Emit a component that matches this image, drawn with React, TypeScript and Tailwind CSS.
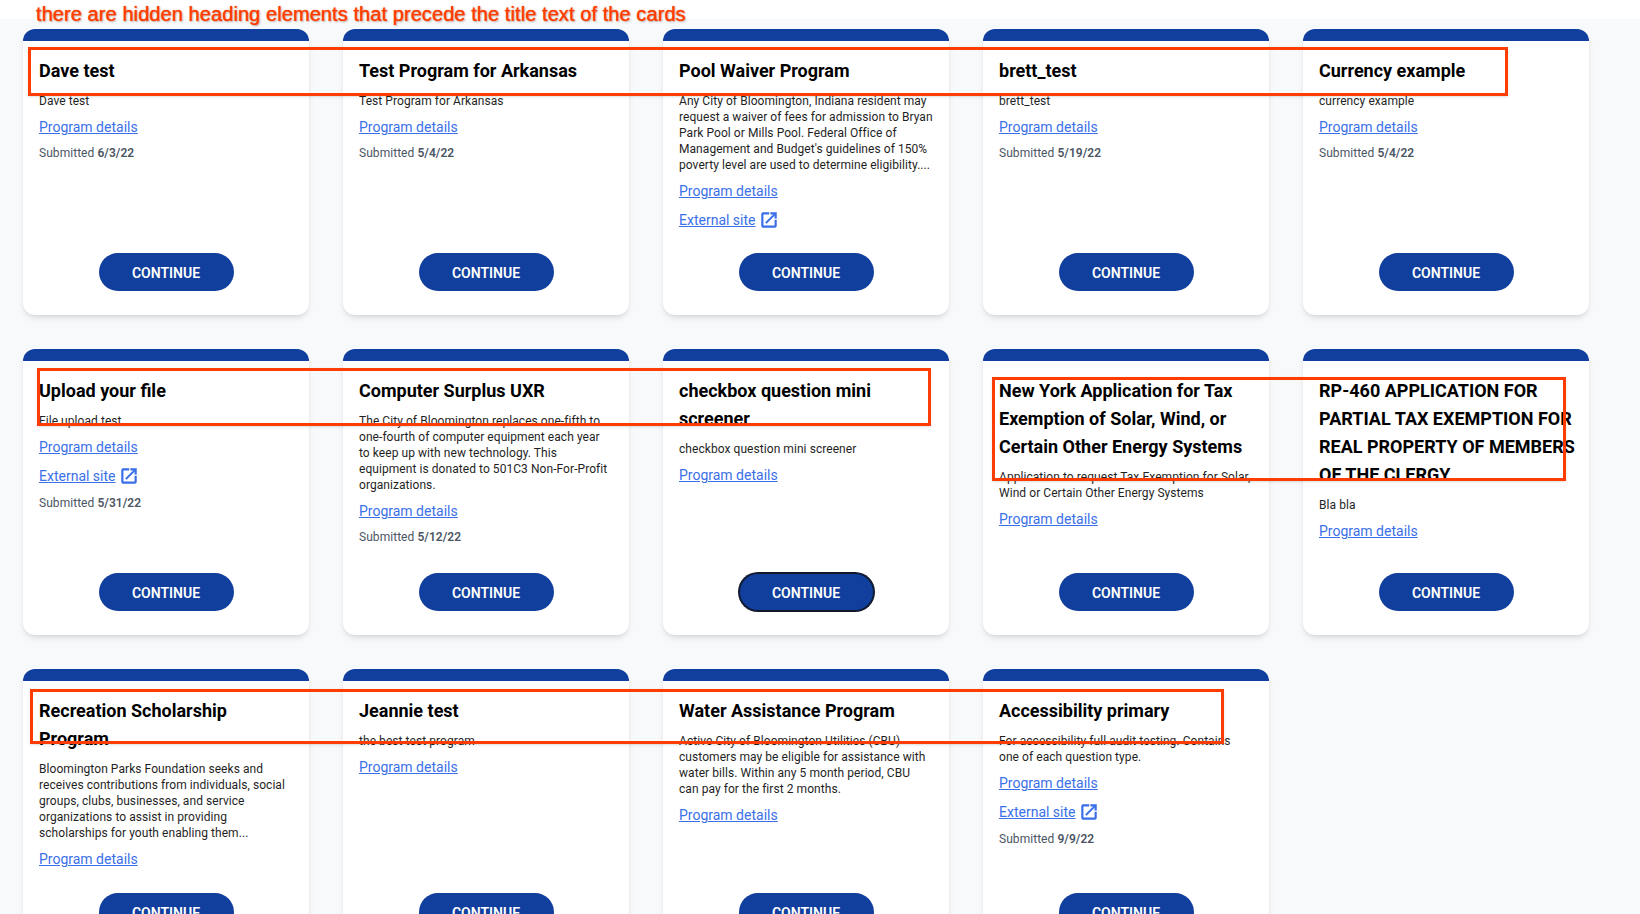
type Program = {
  title: string;
  description: string;
  externalSite?: boolean;
  submitted?: string;
  focused?: boolean;
};

const programs: Program[] = [
  { title: 'Dave test', description: 'Dave test', submitted: '6/3/22' },
  { title: 'Test Program for Arkansas', description: 'Test Program for Arkansas', submitted: '5/4/22' },
  {
    title: 'Pool Waiver Program',
    description:
      "Any City of Bloomington, Indiana resident may request a waiver of fees for admission to Bryan Park Pool or Mills Pool. Federal Office of Management and Budget's guidelines of 150% poverty level are used to determine eligibility....",
    externalSite: true,
  },
  { title: 'brett_test', description: 'brett_test', submitted: '5/19/22' },
  { title: 'Currency example', description: 'currency example', submitted: '5/4/22' },
  { title: 'Upload your file', description: 'File upload test', externalSite: true, submitted: '5/31/22' },
  {
    title: 'Computer Surplus UXR',
    description:
      'The City of Bloomington replaces one-fifth to one-fourth of computer equipment each year to keep up with new technology. This equipment is donated to 501C3 Non-For-Profit organizations.',
    submitted: '5/12/22',
  },
  { title: 'checkbox question mini screener', description: 'checkbox question mini screener', focused: true },
  {
    title: 'New York Application for Tax Exemption of Solar, Wind, or Certain Other Energy Systems',
    description: 'Application to request Tax Exemption for Solar, Wind or Certain Other Energy Systems',
  },
  {
    title: 'RP-460 APPLICATION FOR PARTIAL TAX EXEMPTION FOR REAL PROPERTY OF MEMBERS OF THE CLERGY',
    description: 'Bla bla',
  },
  {
    title: 'Recreation Scholarship Program',
    description:
      'Bloomington Parks Foundation seeks and receives contributions from individuals, social groups, clubs, businesses, and service organizations to assist in providing scholarships for youth enabling them...',
  },
  { title: 'Jeannie test', description: 'the best test program' },
  {
    title: 'Water Assistance Program',
    description:
      'Active City of Bloomington Utilities (CBU) customers may be eligible for assistance with water bills. Within any 5 month period, CBU can\u00a0pay for the first 2 months.',
  },
  {
    title: 'Accessibility primary',
    description: 'For accessibility full audit testing. Contains one of each question type.',
    externalSite: true,
    submitted: '9/9/22',
  },
];

const OpenInNewIcon = () => (
  <svg
    width="20"
    height="20"
    viewBox="0 0 24 24"
    fill="currentColor"
    stroke="currentColor"
    strokeWidth="0.6"
    className="shrink-0"
  >
    <path d="M19 19H5V5h7V3H5a2 2 0 0 0-2 2v14a2 2 0 0 0 2 2h14c1.1 0 2-.9 2-2v-7h-2v7zM14 3v2h3.59l-9.83 9.83 1.41 1.41L19 6.41V10h2V3h-7z" />
  </svg>
);

function ProgramCard({ program }: { program: Program }) {
  return (
    <div className="flex h-[286px] w-[286px] flex-col overflow-hidden rounded-xl bg-white shadow-md">
      <div className="h-3 shrink-0 bg-[#113f9d]" />
      <div className="flex min-h-0 grow flex-col px-4 pt-4">
        <h3 className="-mr-1 text-lg leading-7 font-bold text-black">{program.title}</h3>
        <p className="mt-2 text-xs leading-4 tracking-[0.06px] text-[#1f1f1f]">{program.description}</p>
        <a href="#" className="mt-2 text-sm leading-5 text-[#3b6fe8] underline">
          Program details
        </a>
        {program.externalSite && (
          <a href="#" className="mt-2 flex h-[22px] items-center gap-[3px] text-sm leading-5 text-[#3b6fe8]">
            <span className="underline">External site</span>
            <OpenInNewIcon />
          </a>
        )}
        {program.submitted && (
          <p className="mt-2 text-xs leading-4 tracking-[0.05px] text-[#4b5563]">
            Submitted <span className="font-semibold">{program.submitted}</span>
          </p>
        )}
      </div>
      <div className="flex shrink-0 justify-center pb-6">
        <button
          className={`h-[38px] w-[135px] rounded-full bg-[#113f9d] pt-px text-sm font-semibold text-white uppercase ${
            program.focused ? 'shadow-[0_0_0_1px_#111827,inset_0_0_0_1px_#111827]' : ''
          }`}
        >
          Continue
        </button>
      </div>
    </div>
  );
}

export default function App() {
  return (
    <div className="relative h-[914px] overflow-hidden bg-[#f8f9fb] font-['Roboto',sans-serif]">
      <div className="h-[19px] bg-white" />
      <div className="grid grid-cols-[repeat(5,286px)] gap-[34px] pt-2.5 pl-[23px]">
        {programs.map((p) => (
          <ProgramCard key={p.title} program={p} />
        ))}
      </div>

      {/* annotations drawn over the page */}
      <div className="absolute top-0 left-9 font-['Liberation_Sans',sans-serif] text-xl leading-7 tracking-[0.08px] whitespace-nowrap text-[#ff3d00] [text-shadow:0_0_1px_#ff3d00,1px_1px_2px_rgba(0,0,0,0.3)]">
        there are hidden heading elements that precede the title text of the cards
      </div>
      <div className="absolute top-[47px] left-[28px] h-[49px] w-[1480px] border-[3px] border-[#ff3d00] shadow-sm" />
      <div className="absolute top-[368px] left-[37px] h-[58px] w-[894px] border-[3px] border-[#ff3d00] shadow-sm" />
      <div className="absolute top-[377px] left-[992px] h-[104px] w-[574px] border-[3px] border-[#ff3d00] shadow-sm" />
      <div className="absolute top-[689px] left-[30px] h-[55px] w-[1194px] border-[3px] border-[#ff3d00] shadow-sm" />
    </div>
  );
}
